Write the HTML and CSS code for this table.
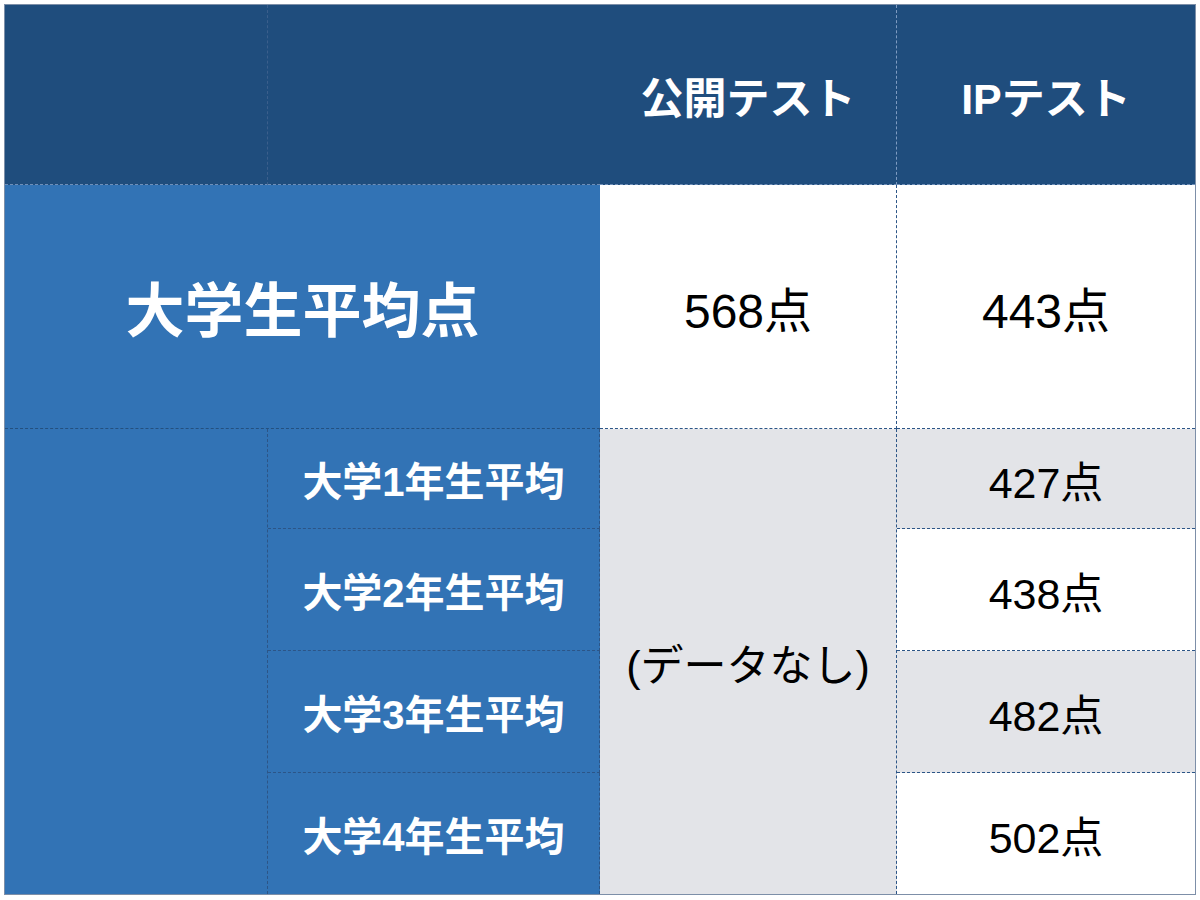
FILE: index.html
```html
<!DOCTYPE html>
<html lang="ja">
<head>
<meta charset="utf-8">
<link rel="stylesheet" href="styles.css">
</head>
<body>
<div class="table">
  <div class="cell head h1"></div>
  <div class="cell head h2"></div>
  <div class="cell head h3">公開テスト</div>
  <div class="cell head h4">IPテスト</div>

  <div class="cell blue big">大学生平均点</div>
  <div class="cell white num-lg bd-r bd-b">568点</div>
  <div class="cell white num-lg bd-b">443点</div>

  <div class="cell blue side bd-r"></div>
  <div class="cell blue sub bd-r bd-b r3">大学1年生平均</div>
  <div class="cell gray nodata bd-r">(データなし)</div>
  <div class="cell gray num bd-b r3">427点</div>

  <div class="cell blue sub bd-r bd-b r4">大学2年生平均</div>
  <div class="cell white num bd-b r4">438点</div>

  <div class="cell blue sub bd-r bd-b r5">大学3年生平均</div>
  <div class="cell gray num bd-b r5">482点</div>

  <div class="cell blue sub bd-r r6">大学4年生平均</div>
  <div class="cell white num r6">502点</div>
</div>
</body>
</html>
```
FILE: styles.css
```css
html, body {
  margin: 0;
  padding: 0;
  background: #ffffff;
}

body {
  font-family: "Liberation Sans", "Noto Sans CJK JP", sans-serif;
  padding: 4px 0 0 4px;
}

.table {
  display: grid;
  grid-template-columns: 263px 332px 297px 298px;
  grid-template-rows: 180px 244px 100px 122px 122px 121px;
  width: max-content;
  border: 1px solid #7d8fa8;
}

.cell {
  box-sizing: border-box;
  display: flex;
  align-items: center;
  justify-content: center;
  white-space: nowrap;
}

.head {
  background: #1f4d7d;
  color: #ffffff;
  font-weight: bold;
  font-size: 43px;
  border-bottom: 1px dashed #6f8fb8;
}

.h1 { border-right: 1px dashed #3b5f8c; }
.h3 { border-right: 1px dashed #7f9cc2; }

.blue { background: #3273b5; color: #ffffff; }
.white { background: #ffffff; color: #000000; }
.gray { background: #e3e4e8; color: #000000; }

.big {
  grid-column: 1 / 3;
  font-size: 59px;
  font-weight: bold;
  border-bottom: 1px dashed #24507f;
}

.bd-r { border-right: 1px dashed #2c5587; }
.bd-b { border-bottom: 1px dashed #2c5587; }

.num-lg { font-size: 48px; }
.num { font-size: 43px; }

.side {
  grid-column: 1;
  grid-row: 3 / 7;
}

.sub {
  grid-column: 2;
  font-size: 40px;
  font-weight: bold;
}

.nodata {
  grid-column: 3;
  grid-row: 3 / 7;
  font-size: 43px;
}

.r3 { grid-row: 3; }
.r4 { grid-row: 4; }
.r5 { grid-row: 5; }
.r6 { grid-row: 6; }
```
